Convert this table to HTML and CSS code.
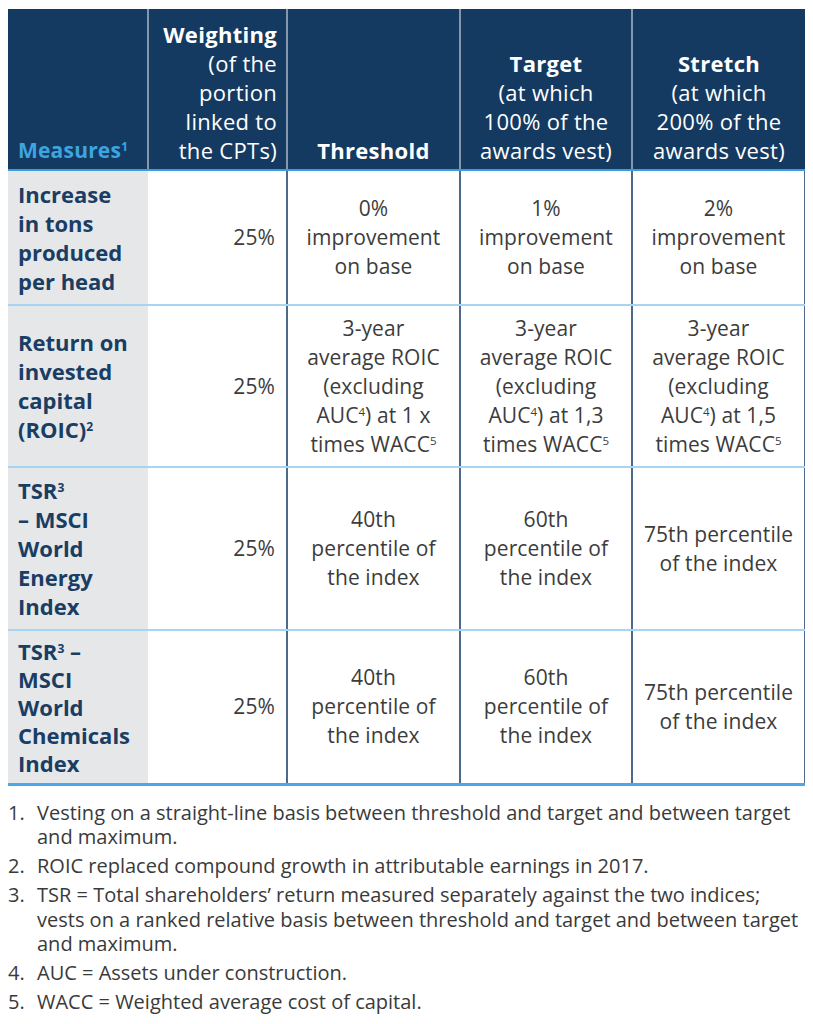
FILE: index.html
```html
<!DOCTYPE html>
<html>
<head>
<meta charset="utf-8">
<link rel="stylesheet" href="styles.css">
</head>
<body>
<table class="cpt">
  <colgroup>
    <col class="c1"><col class="c2"><col class="c3"><col class="c4"><col class="c5">
  </colgroup>
  <thead>
    <tr class="head">
      <th class="h-measures">Measures<sup>1</sup></th>
      <th class="h-weight"><b>Weighting</b><br>(of the<br>portion<br>linked to<br>the CPTs)</th>
      <th class="h-center"><b>Threshold</b></th>
      <th class="h-center"><b>Target</b><br>(at which<br>100% of the<br>awards vest)</th>
      <th class="h-center"><b>Stretch</b><br>(at which<br>200% of the<br>awards vest)</th>
    </tr>
  </thead>
  <tbody>
    <tr class="r1">
      <td class="measure">Increase<br>in tons<br>produced<br>per head</td>
      <td class="weight">25%</td>
      <td class="val">0%<br>improvement<br>on base</td>
      <td class="val">1%<br>improvement<br>on base</td>
      <td class="val last">2%<br>improvement<br>on base</td>
    </tr>
    <tr class="r2">
      <td class="measure">Return on<br>invested<br>capital<br>(ROIC)<sup>2</sup></td>
      <td class="weight">25%</td>
      <td class="val">3-year<br>average ROIC<br>(excluding<br>AUC<sup>4</sup>) at 1 x<br>times WACC<sup>5</sup></td>
      <td class="val">3-year<br>average ROIC<br>(excluding<br>AUC<sup>4</sup>) at 1,3<br>times WACC<sup>5</sup></td>
      <td class="val last">3-year<br>average ROIC<br>(excluding<br>AUC<sup>4</sup>) at 1,5<br>times WACC<sup>5</sup></td>
    </tr>
    <tr class="r3">
      <td class="measure">TSR<sup>3</sup><br>– MSCI<br>World<br>Energy<br>Index</td>
      <td class="weight">25%</td>
      <td class="val">40th<br>percentile of<br>the index</td>
      <td class="val">60th<br>percentile of<br>the index</td>
      <td class="val last">75th percentile<br>of the index</td>
    </tr>
    <tr class="r4">
      <td class="measure tight">TSR<sup>3</sup> –<br>MSCI<br>World<br>Chemicals<br>Index</td>
      <td class="weight">25%</td>
      <td class="val">40th<br>percentile of<br>the index</td>
      <td class="val">60th<br>percentile of<br>the index</td>
      <td class="val last">75th percentile<br>of the index</td>
    </tr>
  </tbody>
</table>
<ol class="notes">
  <li>Vesting on a straight-line basis between threshold and target and between target and maximum.</li>
  <li>ROIC replaced compound growth in attributable earnings in 2017.</li>
  <li>TSR = Total shareholders’ return measured separately against the two indices; vests on a ranked relative basis between threshold and target and between target and maximum.</li>
  <li>AUC = Assets under construction.</li>
  <li>WACC = Weighted average cost of capital.</li>
</ol>
</body>
</html>
```
FILE: styles.css
```css
html, body { background: #ffffff; }
body {
  margin: 9px 8px 0 8px;
  font-family: "Open Sans", "DejaVu Sans", sans-serif;
  color: #3c3c3c;
}
.cpt {
  border-collapse: collapse;
  table-layout: fixed;
  width: 797px;
  font-size: 21px;
  line-height: 29px;
  letter-spacing: 0.1px;
}
.c1 { width: 140px; }
.c2 { width: 139px; }
.c3 { width: 173px; }
.c4 { width: 172px; }
.c5 { width: 173px; }

.head { height: 161px; }
.head th {
  background: #153a61;
  color: #ffffff;
  font-weight: 400;
  font-size: 22px;
  letter-spacing: 0.3px;
  vertical-align: bottom;
  padding: 0 6px 4px 6px;
  border-left: 2px solid #8497ad;
  border-bottom: 2px solid #3d9be0;
}
.head th:first-child { border-left: none; }
.head th b { font-weight: 700; }
.head th.h-measures {
  text-align: left;
  color: #3da5e0;
  font-weight: 700;
  font-size: 21px;
  letter-spacing: 0.2px;
  padding-left: 10px;
}
.h-weight { text-align: right; }
.head th.h-weight { padding-right: 9px; }
.h-center { text-align: center; }
sup { font-size: 0.55em; line-height: 0; vertical-align: 0.6em; letter-spacing: 0; }

tbody td {
  border-bottom: 2px solid #a6d4f2;
  vertical-align: middle;
  padding: 0 4px;
}
tbody tr:last-child td { border-bottom: 3px solid #4aa8e8; }
.r1 { height: 135px; }
.r2 { height: 162px; }
.r3 { height: 163px; }
.r4 { height: 154px; }

.measure {
  background: #e6e7e9;
  color: #1a3d63;
  font-weight: 700;
  font-size: 22px;
  letter-spacing: 0;
  text-align: left;
}
tbody td.measure { padding-left: 10px; }
.measure.tight { line-height: 28px; }
tbody td.weight { text-align: right; padding-right: 11px; }
.val {
  text-align: center;
  border-left: 2px solid #4d6a8a;
}
.val.last { border-right: 2px solid #4d6a8a; }

.notes {
  list-style: none;
  margin: 15px 0 0 0;
  padding: 0 0 0 29px;
  font-size: 20px;
  line-height: 24.5px;
  color: #3a3a3a;
  letter-spacing: 0;
}
.notes li { margin-bottom: 4.5px; }
.notes li::before {
  content: counter(list-item) ".";
  display: inline-block;
  width: 29px;
  margin-left: -29px;
}
```
